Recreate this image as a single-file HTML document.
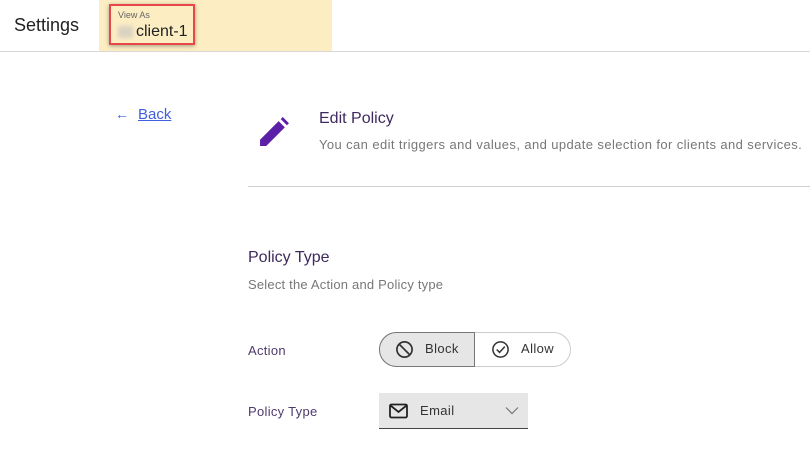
<!DOCTYPE html>
<html><head><meta charset="utf-8"><style>
*{margin:0;padding:0;box-sizing:border-box}
body{width:810px;height:454px;overflow:hidden;background:#fff;font-family:"Liberation Sans",sans-serif;position:relative}
.a{position:absolute;white-space:nowrap}
</style></head><body>
<div class="a" style="left:0;top:51px;width:810px;height:1px;background:#d8d8d8"></div>
<div class="a" style="left:14px;top:15px;font-size:18px;color:#222">Settings</div>
<div class="a" style="left:99px;top:0;width:233px;height:51px;background:#fcedc3"></div>
<div class="a" style="left:109px;top:4px;width:86px;height:41px;border:2px solid #e8474a;box-shadow:0 1px 4px rgba(0,0,0,.35)"></div>
<div class="a" style="left:118px;top:10px;font-size:9px;color:#666">View As</div>
<div class="a" style="left:118px;top:26px;width:15px;height:12px;background:#d9d2c0;filter:blur(2px)"></div>
<div class="a" style="left:136px;top:23px;font-size:16px;color:#222">client-1</div>
<div class="a" style="left:115px;top:106px;font-size:15px;color:#3f5fe0"><span style="font-size:14px">←</span><span style="text-decoration:underline;margin-left:9px">Back</span></div>
<svg class="a" style="left:259px;top:116px" width="31" height="31" viewBox="0 0 30 30"><path d="M1 29 L1 23 L19 5 L25 11 L7 29 Z M21 3 L23 1 L29 7 L27 9 Z" fill="#5c1fa8"/></svg>
<div class="a" style="left:319px;top:110px;font-size:16px;color:#3e2a5c">Edit Policy</div>
<div class="a" style="left:319px;top:137px;font-size:13px;color:#777;letter-spacing:.4px">You can edit triggers and values, and update selection for clients and services.</div>
<div class="a" style="left:248px;top:186px;width:562px;height:1px;background:#d0d0d0"></div>
<div class="a" style="left:248px;top:249px;font-size:16px;color:#3e2a5c">Policy Type</div>
<div class="a" style="left:248px;top:277px;font-size:13px;color:#777;letter-spacing:.2px">Select the Action and Policy type</div>
<div class="a" style="left:248px;top:343px;font-size:13px;color:#4e3a6e;letter-spacing:.3px">Action</div>
<div class="a" style="left:379px;top:332px;width:192px;height:35px;border:1px solid #ccc;border-radius:18px"></div>
<div class="a" style="left:379px;top:332px;width:96px;height:35px;border:1px solid #777;border-radius:18px 0 0 18px;background:#e6e6e6"></div>
<svg class="a" style="left:395px;top:340px" width="19" height="19" viewBox="0 0 20 20"><circle cx="10" cy="10" r="8" fill="none" stroke="#333" stroke-width="1.8"/><path d="M4.5 4.5 L15.5 15.5" stroke="#333" stroke-width="1.8"/></svg>
<div class="a" style="left:425px;top:341px;font-size:13px;color:#333;letter-spacing:.4px">Block</div>
<svg class="a" style="left:491px;top:340px" width="19" height="19" viewBox="0 0 20 20"><circle cx="10" cy="10" r="8" fill="none" stroke="#333" stroke-width="1.6"/><path d="M6 10 L9 13 L14.5 7" fill="none" stroke="#333" stroke-width="1.6"/></svg>
<div class="a" style="left:521px;top:341px;font-size:13px;color:#333;letter-spacing:.4px">Allow</div>
<div class="a" style="left:248px;top:404px;font-size:13px;color:#4e3a6e;letter-spacing:.3px">Policy Type</div>
<div class="a" style="left:379px;top:393px;width:149px;height:36px;background:#e6e6e6;border-bottom:1.5px solid #444"></div>
<svg class="a" style="left:389px;top:403px" width="20" height="16" viewBox="0 0 20 16"><rect x="1" y="1.5" width="17" height="13" rx="1.5" fill="none" stroke="#222" stroke-width="1.8"/><path d="M1.5 2.5 L9.5 9 L17.5 2.5" fill="none" stroke="#222" stroke-width="1.8"/></svg>
<div class="a" style="left:420px;top:403px;font-size:13px;color:#333;letter-spacing:.4px">Email</div>
<svg class="a" style="left:505px;top:406px" width="14" height="9" viewBox="0 0 14 9"><path d="M1 1.5 L7 7.5 L13 1.5" fill="none" stroke="#777" stroke-width="1.2"/></svg>
</body></html>
